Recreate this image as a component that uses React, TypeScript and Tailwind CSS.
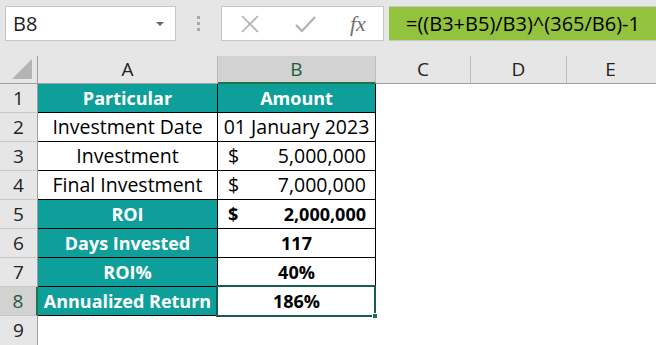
import React from "react";

const font = { fontFamily: '"Open Sans", "Liberation Sans", sans-serif' };

type Row = {
  n: number;
  a: string;
  aTeal: boolean;
  b: React.ReactNode;
  bTeal?: boolean;
};

function Money({ v, bold }: { v: string; bold?: boolean }) {
  return (
    <div className={`flex w-full justify-between pl-[10px] pr-[9px] ${bold ? "font-bold text-[18px]" : ""}`}>
      <span>$</span>
      <span>{v}</span>
    </div>
  );
}

const rows: Row[] = [
  { n: 1, a: "Particular", aTeal: true, b: "Amount", bTeal: true },
  { n: 2, a: "Investment Date", aTeal: false, b: "01 January 2023" },
  { n: 3, a: "Investment", aTeal: false, b: <Money v="5,000,000" /> },
  { n: 4, a: "Final Investment", aTeal: false, b: <Money v="7,000,000" /> },
  { n: 5, a: "ROI", aTeal: true, b: <Money v="2,000,000" bold /> },
  { n: 6, a: "Days Invested", aTeal: true, b: <span className="font-bold text-[18px]">117</span> },
  { n: 7, a: "ROI%", aTeal: true, b: <span className="font-bold text-[18px]">40%</span> },
  { n: 8, a: "Annualized Return", aTeal: true, b: <span className="font-bold text-[18px]">186%</span> },
];

export default function App() {
  return (
    <div className="w-[656px] h-[345px] overflow-hidden bg-white relative" style={font}>
      {/* Top bar */}
      <div className="h-[56px] bg-[#e6e6e6] flex items-start pt-[6px]">
        <div className="ml-[5px] w-[171px] h-[35px] bg-white border border-[#c6c6c6] flex items-center justify-between pl-[7px] pr-[11px]">
          <span className="text-[20px] text-[#222]">B8</span>
          <span className="w-0 h-0 border-l-[4px] border-r-[4px] border-t-[4px] border-l-transparent border-r-transparent border-t-[#6b6b6b]" />
        </div>
        <div className="w-[45px] h-[35px] flex flex-col items-center justify-center gap-[3px]">
          <span className="w-[3px] h-[3px] bg-[#a8a8a8]" />
          <span className="w-[3px] h-[3px] bg-[#a8a8a8]" />
          <span className="w-[3px] h-[3px] bg-[#a8a8a8]" />
        </div>
        <div className="w-[163px] h-[35px] bg-white border border-[#c6c6c6] flex items-center">
          <svg width="20" height="18" viewBox="0 0 20 18" className="ml-[18px]">
            <path d="M2 1 L18 17 M18 1 L2 17" stroke="#b0b0b0" strokeWidth="1.6" fill="none" />
          </svg>
          <svg width="22" height="18" viewBox="0 0 22 18" className="ml-[35px]">
            <path d="M1 10 L7 16 L20 2" stroke="#b0b0b0" strokeWidth="2.2" fill="none" />
          </svg>
          <span
            className="ml-[33px] text-[22px] italic text-[#707070] leading-none"
            style={{ fontFamily: '"Liberation Serif", "DejaVu Serif", serif' }}
          >
            fx
          </span>
        </div>
        <div className="ml-[5px] flex-1 h-[35px] bg-[#93c23e] border-y border-[#c6c6c6] flex items-center pl-[17px]">
          <span className="text-[20px] text-black whitespace-nowrap leading-none">=((B3+B5)/B3)^(365/B6)-1</span>
        </div>
      </div>

      {/* Column headers */}
      <div className="flex h-[28px] bg-[#e6e6e6]">
        <div className="w-[38px] h-full border-r border-b border-[#9f9f9f] relative">
          <svg width="22" height="22" className="absolute right-[4px] bottom-[3px]">
            <polygon points="21,1 21,21 1,21" fill="#b4b4b4" />
          </svg>
        </div>
        <div className="w-[180px] h-full border-r border-[#bcbcbc] border-b border-b-[#9f9f9f] flex items-center justify-center text-[19px] text-[#222]">A</div>
        <div className="w-[158px] h-full bg-[#d2d2d2] border-r border-[#bcbcbc] border-b-2 border-b-[#217346] flex items-center justify-center text-[19px] text-[#1e5c3a]">B</div>
        <div className="w-[95px] h-full border-r border-[#bcbcbc] border-b border-b-[#9f9f9f] flex items-center justify-center text-[19px] text-[#222]">C</div>
        <div className="w-[96px] h-full border-r border-[#bcbcbc] border-b border-b-[#9f9f9f] flex items-center justify-center text-[19px] text-[#222]">D</div>
        <div className="flex-1 h-full border-b border-[#9f9f9f] flex items-center justify-center text-[19px] text-[#222] pr-[2px]">E</div>
      </div>

      {/* Rows */}
      {rows.map((r) => (
        <div key={r.n} className="flex h-[29px]">
          <div
            className={`w-[38px] h-full border-r border-b border-b-[#c8c8c8] flex items-center justify-center text-[19px] ${
              r.n === 8 ? "bg-[#d2d2d2] border-r-2 border-r-[#217346] text-[#1e5c3a]" : "bg-[#e6e6e6] border-r-[#9f9f9f] text-[#222]"
            }`}
          >
            {r.n}
          </div>
          <div
            className={`w-[180px] h-full border-r border-b border-black flex items-center justify-center whitespace-nowrap ${
              r.aTeal ? "bg-[#0f9f9b] text-white font-bold text-[18px]" : "bg-white text-black text-[19.5px]"
            }`}
          >
            {r.a}
          </div>
          <div
            className={`w-[158px] h-full border-r border-b border-black flex items-center justify-center whitespace-nowrap relative ${
              r.bTeal ? "bg-[#0f9f9b] text-white font-bold text-[18px]" : "bg-white text-black text-[19.5px]"
            }`}
          >
            {r.b}
            {r.n === 8 && (
              <div className="absolute left-[-2px] top-[-2px] right-[-1px] bottom-[-2px] border-2 border-[#185b55]">
                <div className="absolute right-[-4px] bottom-[-4px] w-[6px] h-[6px] bg-[#217346] border border-white" />
              </div>
            )}
          </div>
          <div className="flex-1 h-full bg-white" />
        </div>
      ))}
      <div className="flex h-[29px]">
        <div className="w-[38px] h-full bg-[#e6e6e6] border-r border-[#9f9f9f] flex items-center justify-center text-[19px] text-[#222]">9</div>
        <div className="flex-1 h-full bg-white" />
      </div>
    </div>
  );
}
